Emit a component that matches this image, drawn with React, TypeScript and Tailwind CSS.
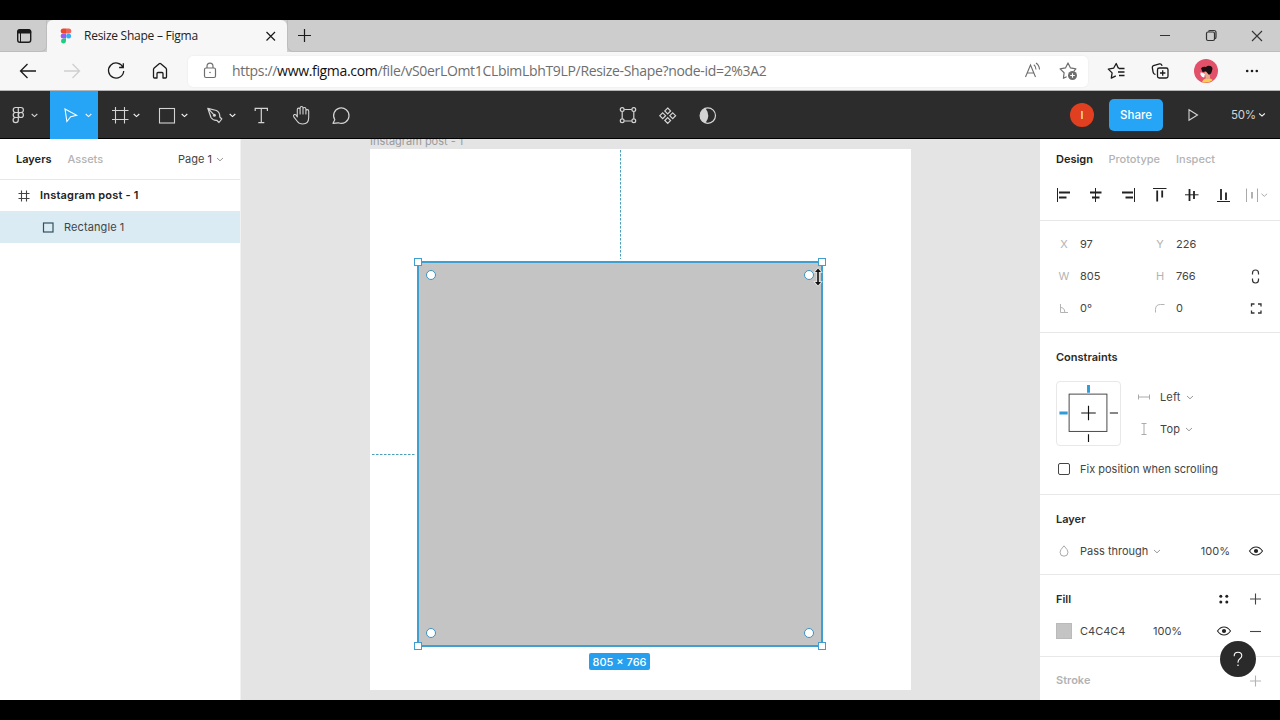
import type { ReactNode } from "react";

type IconProps = { w?: number; h?: number; className?: string; children: ReactNode };

function Icon({ w = 32, h = 32, className = "", children }: IconProps) {
  return (
    <svg
      width={w}
      height={h}
      viewBox={`0 0 ${w} ${h}`}
      fill="none"
      stroke="currentColor"
      className={`shrink-0 ${className}`}
    >
      {children}
    </svg>
  );
}

function FigmaMark() {
  return (
    <svg width="12" height="16" viewBox="0 0 12 16" className="shrink-0">
      <path d="M6 .5H3.2a2.5 2.5 0 0 0 0 5H6z" fill="#e8492f" />
      <path d="M6 .5h2.8a2.5 2.5 0 0 1 0 5H6z" fill="#f0655a" />
      <path d="M6 5.5H3.2a2.5 2.5 0 0 0 0 5H6z" fill="#9a5cf0" />
      <circle cx="8.6" cy="8" r="2.5" fill="#35aef5" />
      <path d="M6 10.5H3.2A2.5 2.5 0 1 0 6 13z" fill="#1fce7c" />
    </svg>
  );
}

function TabStrip() {
  return (
    <div className="flex h-8 shrink-0 bg-[#cdcdcd] text-[#1b1b1b]">
      <div className="flex w-[47px] items-center justify-center rounded-br-md border-r border-b border-[#bdbdbd] pl-[2px]">
        <Icon w={16} h={16}>
          <rect x="1.700" y="1.700" width="13" height="12.6" rx="2.2" strokeWidth="1.4" />
          <path d="M1.700 5V3.500Q2 1.700 3.900 1.700h8.600q2 0 2.200 1.800V5z" fill="currentColor" />
          <path d="M4.500 5v9" strokeWidth="1" />
        </Icon>
      </div>
      <div className="flex w-[240px] items-center rounded-t-md bg-[#f7f7f7] pr-[10px] pl-[13px]">
        <FigmaMark />
        <span className="ml-3 flex-1 font-['Open_Sans',sans-serif] text-[12px] tracking-[-0.250px] whitespace-nowrap text-[#222]">
          Resize Shape – Figma
        </span>
        <Icon w={14} h={14}>
          <path d="M3.500 3l8.500 8.500M12 3L3.500 11.500" strokeWidth="1.200" />
        </Icon>
      </div>
      <div className="flex flex-1 items-center rounded-bl-md border-b border-l border-[#bdbdbd] pl-[9px]">
        <Icon w={16} h={16}>
          <path d="M7.500 1v13M1 7.500h13" strokeWidth="1.200" />
        </Icon>
      </div>
      <div className="flex border-b border-[#bdbdbd] text-[#333]">
        <Icon w={46} h={32}>
          <path d="M18 15.500h10" strokeWidth="1" />
        </Icon>
        <Icon w={46} h={32}>
          <rect x="18.500" y="12" width="8" height="8.500" rx="1.500" strokeWidth="1.200" />
          <path d="M20.500 11.500q.3-1 1.700-1h3.800q2 0 2 2v4.500q0 1.300-1 1.700" strokeWidth="1.200" />
        </Icon>
        <Icon w={46} h={32}>
          <path d="M18 11l10 10M28 11L18 21" strokeWidth="1.100" />
        </Icon>
      </div>
    </div>
  );
}

function AddressBar() {
  return (
    <div className="flex h-[39px] shrink-0 items-center border-b border-[#b5b5b5] bg-[#f7f7f7] pl-[6px] text-[#1b1b1b]">
      <Icon w={44} h={38}>
        <path d="M30 19H14.500M21.500 12L14.500 19l7 7" strokeWidth="1.300" />
      </Icon>
      <Icon w={44} h={38} className="text-[#cfcfcf]">
        <path d="M14 19h15.500M22.500 12l7 7-7 7" strokeWidth="1.300" />
      </Icon>
      <Icon w={44} h={38}>
        <path d="M29 15.300A7.600 7.600 0 1 0 29.700 19M29.300 11.300v4.200h-4.200" strokeWidth="1.300" />
      </Icon>
      <Icon w={44} h={38}>
        <path
          d="M15.500 17.500q0-.9.700-1.500l5-4.300q.8-.6 1.600 0l5 4.300q.7.600.7 1.500v7.500q0 1-1 1H25v-4.500q0-1-1-1h-4q-1 0-1 1V26h-2.500q-1 0-1-1z"
          strokeWidth="1.300"
          strokeLinejoin="round"
        />
      </Icon>
      <div className="ml-[6px] flex h-[31px] w-[900px] items-center rounded-[5px] bg-white pl-3 text-[#6e6e6e] shadow-[0_0_2px_rgba(0,0,0,0.08)]">
        <Icon w={20} h={30}>
          <rect x="4.500" y="12" width="11" height="9.500" rx="1.500" strokeWidth="1.200" />
          <path d="M7 12V10.500q0-3.300 3-3.300t3 3.300v1.500" strokeWidth="1.200" />
          <circle cx="10" cy="16.500" r=".8" fill="currentColor" stroke="none" />
        </Icon>
        <span className="ml-3 flex-1 font-['Open_Sans',sans-serif] text-[14px] leading-5 tracking-[-0.330px] whitespace-nowrap">
          https://<span className="text-[#111]">www.figma.com</span>
          /file/vS0erLOmt1CLbimLbhT9LP/Resize-Shape?node-id=2%3A2
        </span>
        <Icon w={36} h={30}>
          <path d="M11.500 21l5-12 5 12M13.200 17h6.600" strokeWidth="1.100" />
          <path d="M19.800 8.800q2.200 1.600 2.200 4.600M22 7q3.300 2.300 3.500 6.500" strokeWidth="1.100" />
        </Icon>
        <Icon w={36} h={30} className="mr-[2px]">
          <path
            d="M14.500 20.300l-3.300 1.500.7-5.500-4-3.900 5.400-1L15.800 6.500l2.500 4.900 5.400 1-2 2.300"
            transform="translate(2.200 .5)"
            strokeWidth="1.200"
            strokeLinejoin="round"
          />
          <circle cx="22.500" cy="19.500" r="4.500" fill="currentColor" stroke="none" />
          <path d="M22.500 17.200v4.600M20.200 19.500h4.600" stroke="white" strokeWidth="1.100" />
        </Icon>
      </div>
      <Icon w={44} h={38} className="ml-[6px]">
        <path
          d="M22.500 16.300h-.8l-2-4.500-2.600 4.700-5.300.9 3.800 3.800-.8 5.300 4.500-2.300"
          transform="translate(2.500 -.3)"
          strokeWidth="1.300"
          strokeLinejoin="round"
        />
        <path d="M25 16.500h5.500M24 20h6.500M25 23.500h5.500" strokeWidth="1.300" />
      </Icon>
      <Icon w={44} h={38}>
        <rect x="19.500" y="16" width="10.500" height="10" rx="1.800" strokeWidth="1.300" />
        <path d="M24.700 18.300v5.400M22 21h5.400" strokeWidth="1.300" />
        <path
          d="M17.500 22.500l-1.200-.5q-1-.6-1.200-1.800l-.8-4.500q-.1-1.500 1.200-2l6-1.800q1.800-.3 2.300 1.200l.2.800"
          strokeWidth="1.300"
        />
      </Icon>
      <svg width="24" height="24" viewBox="0 0 24 24" className="ml-3 shrink-0">
        <circle cx="12" cy="12" r="12" fill="#e2506a" />
        <path d="M8 23.300q.8-3.600 5.500-4.300 4 .2 5 2.200Q15 24.500 8 23.300z" fill="#f5d04c" />
        <path d="M10 11h5.500l.5 8q-2 2-4 .8z" fill="#e9a98c" />
        <path d="M7 9.300Q9 7.300 12 8q1.500-2 4.500-1 2.800 1.300 1.700 4-.6 4-3.400 4.700L12 12.500 8.500 13z" fill="#1a1014" />
        <path d="M6.500 13.500q2.800-.3 4.500 1.500l-.8 3.500Q7.500 18.500 6.500 15.500z" fill="#fff" />
      </svg>
      <Icon w={24} h={38} className="ml-[22px]">
        <g fill="currentColor" stroke="none">
          <circle cx="7.200" cy="19" r="1.300" />
          <circle cx="12" cy="19" r="1.300" />
          <circle cx="16.800" cy="19" r="1.300" />
        </g>
      </Icon>
    </div>
  );
}

function ToolChevron() {
  return <path d="M35.700 23l2.800 2.600 2.800-2.600" stroke="#f4f4f4" strokeWidth="1.100" />;
}

function Toolbar() {
  return (
    <div className="flex h-12 shrink-0 items-center border-b border-black bg-[#2c2c2c] text-[#d4d4d4]">
      <div className="flex w-[608px]">
        <Icon w={50} h={48}>
          <path
            d="M18.300 16.500v12.600a2.600 2.600 0 1 1-2.600-2.600h2.600M18.300 16.500h-2.600a2.500 2.500 0 0 0 0 5h5.200a2.500 2.500 0 0 0 0-5zM18.300 21.500h-2.600a2.500 2.500 0 0 0 0 5h2.600"
            strokeWidth="1.200"
          />
          <circle cx="20.900" cy="24" r="2.500" strokeWidth="1.200" />
          <path d="M31.700 23l2.800 2.600 2.800-2.600" strokeWidth="1.100" />
        </Icon>
        <Icon w={48} h={48} className="bg-[#26a4f5] text-white">
          <path d="M15 18l11.600 6.200-5.900 1.500-3.800 4.800z" strokeWidth="1.100" />
          <ToolChevron />
        </Icon>
        <Icon w={48} h={48}>
          <path d="M17.500 16v16.500M26.500 16v16.500M14 19.500h16.500M14 28.500h16.500" strokeWidth="1.100" />
          <ToolChevron />
        </Icon>
        <Icon w={48} h={48}>
          <rect x="13.500" y="17.500" width="15" height="14.500" strokeWidth="1.100" />
          <ToolChevron />
        </Icon>
        <Icon w={48} h={48}>
          <path
            d="M13.800 17.300l8.700 2.200q3.500 1.700 3.300 6.500l2 2-2.800 3.500-2.300-2.200q-3.700.3-5.700-2.800zM14.200 17.700l5.600 6"
            strokeWidth="1.200"
            strokeLinejoin="round"
          />
          <circle cx="20.400" cy="24.200" r="1.500" fill="currentColor" stroke="none" />
          <ToolChevron />
        </Icon>
        <Icon w={40} h={48}>
          <path d="M13.200 20v-2.700h12.200V20M19.300 17.300v14.200M16.300 31.700h6" strokeWidth="1.200" />
        </Icon>
        <Icon w={40} h={48}>
          <path
            d="M15 26v-7.500a1.400 1.400 0 0 1 2.800 0V23v-6a1.400 1.400 0 0 1 2.900 0v6-5a1.400 1.400 0 0 1 2.900 0v5-3a1.400 1.400 0 0 1 2.800 0v6.500q0 6.500-6 6.500-3.600 0-5.300-2.500l-3.600-4.700q-.8-1.500.5-2.200 1.200-.4 2 .6z"
            transform="translate(.3 0)"
            strokeWidth="1.100"
            strokeLinejoin="round"
          />
        </Icon>
        <Icon w={40} h={48}>
          <path d="M11 32.300l1.800-3.500a7.700 7.700 0 1 1 3.600 3z" strokeWidth="1.200" strokeLinejoin="round" />
        </Icon>
      </div>
      <div className="flex">
        <Icon w={40} h={48}>
          <path d="M14.200 20.500v7.300M25.800 20.500v7.300M16.300 18.500h7.400M16.300 30h7.400" strokeWidth="1.200" />
          <g strokeWidth="1.200">
            <circle cx="14.200" cy="18.600" r="1.900" />
            <circle cx="25.800" cy="18.600" r="1.900" />
            <circle cx="14.200" cy="29.800" r="1.900" />
            <circle cx="25.800" cy="29.800" r="1.900" />
          </g>
        </Icon>
        <Icon w={40} h={48}>
          <path
            d="M19.700 17l2.900 2.900-2.900 2.900-2.900-2.900zM19.700 26.600l2.900 2.900-2.900 2.900-2.900-2.900zM14.700 21.800l2.900 2.900-2.900 2.900-2.900-2.900zM24.700 21.800l2.900 2.900-2.900 2.900-2.900-2.900z"
            strokeWidth="1.200"
          />
        </Icon>
        <Icon w={40} h={48}>
          <circle cx="19.800" cy="24.600" r="7.700" strokeWidth="1.200" />
          <path d="M17.500 17.200q5.500 7.400 0 14.800-5.500-2-5.500-7.400t5.500-7.400z" fill="currentColor" stroke="none" />
        </Icon>
      </div>
      <div className="flex flex-1 items-center justify-end pt-px font-['Inter',sans-serif]">
        <div className="flex size-6 items-center justify-center rounded-full bg-[#e0401f] text-[11px] text-white">I</div>
        <div className="ml-[15px] flex h-8 w-[54px] items-center justify-center rounded-[5px] bg-[#26a4f5] pt-px text-[11.500px] font-medium text-white">
          Share
        </div>
        <Icon w={20} h={48} className="ml-[20px]">
          <path d="M6 18.700l8.500 5.300-8.500 5.200z" strokeWidth="1.100" />
        </Icon>
        <span className="ml-7 w-[24px] pt-[2px] text-[11.500px] tracking-[-0.300px] whitespace-nowrap">50%</span>
        <Icon w={14} h={48} className="mr-[11px]">
          <path d="M4.200 22.500l2.800 2.600 2.800-2.600" stroke="#f4f4f4" strokeWidth="1.100" />
        </Icon>
      </div>
    </div>
  );
}

function SmallChevron() {
  return (
    <Icon w={8} h={8} className="text-[#999]">
      <path d="M1 3l3 2.800 3-2.800" strokeWidth="1" />
    </Icon>
  );
}

function LayersPanel() {
  return (
    <div className="flex w-[241px] shrink-0 flex-col border-r border-[#f2f2f2] bg-white">
      <div className="flex h-[41px] items-center border-b border-[#e8e8e8] pl-4">
        <span className="font-semibold text-[#222]">Layers</span>
        <span className="ml-4 font-medium text-[#b3b3b3]">Assets</span>
        <span className="mr-1 ml-auto">Page 1</span>
        <div className="mr-4">
          <SmallChevron />
        </div>
      </div>
      <div className="flex h-[31px] items-center pl-4">
        <Icon w={16} h={16} className="text-[#444]">
          <path d="M5.500 2.500v11M10.500 2.500v11M2.500 5.500h11M2.500 10.500h11" strokeWidth="1.100" />
        </Icon>
        <span className="ml-2 font-semibold tracking-[0.200px] text-[#222]">Instagram post - 1</span>
      </div>
      <div className="flex h-8 items-center bg-[#daebf4] pl-10">
        <Icon w={16} h={16} className="text-[#34505c]">
          <rect x="3.500" y="4" width="9.500" height="9" strokeWidth="1.200" />
        </Icon>
        <span className="ml-2 tracking-[0.100px]">Rectangle 1</span>
      </div>
    </div>
  );
}

const corners = ["-left-[5px] -top-[5px]", "-right-[5px] -top-[5px]", "-left-[5px] -bottom-[5px]", "-right-[5px] -bottom-[5px]"];
const radii = ["left-[7px] top-[7px]", "right-[7px] top-[7px]", "left-[7px] bottom-[7px]", "right-[7px] bottom-[7px]"];

function Canvas() {
  return (
    <div className="relative flex-1 overflow-hidden bg-[#e4e4e4]">
      <span className="absolute -top-[6px] left-[129px] text-[11px] leading-4 whitespace-nowrap text-[#9a9a9a]">
        Instagram post - 1
      </span>
      <div className="absolute top-[10px] left-[129px] h-[541px] w-[541px] bg-white">
        <svg width="1" height="112" viewBox="0 0 1 112" className="absolute top-0 left-[250px]">
          <path d="M.5 1v109" stroke="#4aa0b8" strokeDasharray="2.500 1.500" />
        </svg>
        <svg width="48" height="1" viewBox="0 0 48 1" className="absolute top-[305px] left-0">
          <path d="M2 .5h44" stroke="#4aa0b8" strokeDasharray="2.500 1.500" />
        </svg>
        <div className="absolute top-[112px] left-[47px] h-[386px] w-[406px] border-2 border-[#3fa0cf] bg-[#c4c4c4]">
          {corners.map((c) => (
            <div key={c} className={`absolute size-2 border border-[#3fa0cf] bg-white ${c}`} />
          ))}
          {radii.map((c) => (
            <div key={c} className={`absolute size-[10px] rounded-full border border-[#3b93c0] bg-white ${c}`} />
          ))}
        </div>
        <div className="absolute top-[504px] left-[219px] flex h-[17px] w-[61px] items-center justify-center rounded-[2px] bg-[#26a0ee] pt-px text-[11px] font-medium whitespace-nowrap text-white">
          805 × 766
        </div>
        <svg width="10" height="20" viewBox="0 0 10 20" className="absolute top-[118px] left-[443px]">
          <path
            d="M5 1.500L8 5H5.800v10H8L5 18.500 2 15h2.200V5H2z"
            fill="#111"
            stroke="#e8e8e8"
            strokeWidth="1.600"
            paintOrder="stroke"
          />
        </svg>
      </div>
    </div>
  );
}

function Field({ label, value }: { label: ReactNode; value: string }) {
  return (
    <div className="flex w-24 items-center">
      <span className="flex w-8 justify-center text-[#b3b3b3]">{label}</span>
      <span>{value}</span>
    </div>
  );
}

function Title({ children }: { children: ReactNode }) {
  return <span className="font-semibold text-[#2a2a2a]">{children}</span>;
}

function Eye() {
  return (
    <Icon className="text-[#222]">
      <path d="M9.500 16q2.700-4 6.500-4t6.500 4q-2.700 4-6.500 4t-6.500-4z" strokeWidth="1.100" />
      <circle cx="16" cy="16" r="2.100" fill="currentColor" stroke="none" />
    </Icon>
  );
}

function Plus({ className = "" }: { className?: string }) {
  return (
    <Icon className={className}>
      <path d="M15.500 10.500v11M10 16h11" strokeWidth="1.100" />
    </Icon>
  );
}

function DesignPanel() {
  return (
    <div className="flex w-60 shrink-0 flex-col overflow-hidden bg-white">
      <div className="flex h-10 shrink-0 items-center gap-4 pl-4 font-medium text-[#b3b3b3]">
        <span className="-mr-[0.500px] font-semibold text-[#222]">Design</span>
        <span>Prototype</span>
        <span>Inspect</span>
      </div>
      <div className="flex h-[42px] shrink-0 border-b border-[#e8e8e8] pl-2 text-[#222]">
        <Icon>
          <path d="M9.500 9v14" strokeWidth="1" />
          <path d="M11 13.500h11M11 18.500h7.500" strokeWidth="1.800" />
        </Icon>
        <Icon>
          <path d="M15.500 9v14" strokeWidth="1" />
          <path d="M10 13.500h11.500M12 18.500h7.500" strokeWidth="1.800" />
        </Icon>
        <Icon>
          <path d="M22.500 9v14" strokeWidth="1" />
          <path d="M10 13.500h11M13.500 18.500h7.500" strokeWidth="1.800" />
        </Icon>
        <Icon>
          <path d="M9 9.500h13.500" strokeWidth="1" />
          <path d="M13.200 11.500v11M18.200 11.500v7" strokeWidth="1.800" />
        </Icon>
        <Icon>
          <path d="M9 15.800h13.500" strokeWidth="1" />
          <path d="M13.500 10v12M18 12v8" strokeWidth="1.800" />
        </Icon>
        <Icon>
          <path d="M9 22.500h13" strokeWidth="1" />
          <path d="M13 10v11M18 13.500V21" strokeWidth="1.800" />
        </Icon>
        <Icon className="text-[#aaa]">
          <path d="M6.500 9.500v13.500M17.500 9.500v13.500M21.500 14.800l2.800 2.500 2.800-2.500" strokeWidth="1" />
          <path d="M12 13v6.500" strokeWidth="1.800" />
        </Icon>
      </div>

      <div className="flex h-[112px] shrink-0 flex-col border-b border-[#e8e8e8] pt-[7px] pl-2">
        <div className="flex h-8 items-center">
          <Field label="X" value="97" />
          <Field label="Y" value="226" />
        </div>
        <div className="flex h-8 items-center">
          <Field label="W" value="805" />
          <Field label="H" value="766" />
          <Icon className="text-[#333]">
            <path d="M12.500 14.500v-1.500a3 3 0 0 1 6 0V14.500M12.500 18.500v1.500a3 3 0 0 0 6 0V18.500" strokeWidth="1.200" />
          </Icon>
        </div>
        <div className="flex h-8 items-center">
          <Field
            label={
              <Icon w={12} h={12}>
                <path d="M2.500 2v8.500h7.500M2.500 5.500q4 0 4.300 4.500" strokeWidth="1" />
              </Icon>
            }
            value="0°"
          />
          <Field
            label={
              <Icon w={12} h={12}>
                <path d="M1.500 10.500V7.500q0-5 5-5h4" strokeWidth="1" />
              </Icon>
            }
            value="0"
          />
          <Icon className="text-[#333]">
            <path d="M11.500 14.500v-2.500h3M18 12h3v2.500M21 18.500v2.500h-3M14.500 21h-3V18.500" strokeWidth="1.300" />
          </Icon>
        </div>
      </div>

      <div className="flex h-[162px] shrink-0 flex-col border-b border-[#e8e8e8] pt-2 pl-4">
        <div className="flex h-8 items-center">
          <Title>Constraints</Title>
        </div>
        <div className="mt-2 flex h-16">
          <svg
            width="65"
            height="65"
            viewBox="0 0 65 65"
            fill="none"
            stroke="#111"
            className="shrink-0 rounded-sm border border-[#e8e8e8]"
          >
            <rect x="12.500" y="12.500" width="39" height="38.500" stroke="#444" />
            <path d="M32.500 24.500v15M25 32h15M54.500 32h8.500M32.500 54v8" strokeWidth="1.200" />
            <path d="M32.500 3v8M2.500 32H11" stroke="#2f9bd8" strokeWidth="3" />
          </svg>
          <div className="flex flex-col pl-[7px]">
            <div className="flex h-8 items-center">
              <Icon className="text-[#aaa]">
                <path d="M10.500 13.500v5M21.500 13.500v5M10.500 16h11" strokeWidth="1" />
              </Icon>
              <span className="mr-[5px] tracking-[0.150px]">Left</span>
              <SmallChevron />
            </div>
            <div className="flex h-8 items-center">
              <Icon className="text-[#aaa]">
                <path d="M13.500 10.500h5M13.500 21.500h5M16 10.500v11" strokeWidth="1" />
              </Icon>
              <span className="mr-[5px] tracking-[0.150px]">Top</span>
              <SmallChevron />
            </div>
          </div>
        </div>
        <div className="mt-2 flex h-8 items-center">
          <span className="mr-[10px] ml-[2px] size-3 rounded-[2px] border border-[#444]" />
          <span>Fix position when scrolling</span>
        </div>
      </div>

      <div className="flex h-20 shrink-0 flex-col border-b border-[#e8e8e8] pt-2">
        <div className="flex h-8 items-center pl-4">
          <Title>Layer</Title>
        </div>
        <div className="flex h-8 items-center pl-2">
          <Icon className="text-[#aaa]">
            <path d="M16 10.800q-4 4.200-4 6.400a4 4 0 0 0 8 0q0-2.200-4-6.400z" strokeWidth="1" />
          </Icon>
          <span className="mr-[5px]">Pass through</span>
          <SmallChevron />
          <span className="ml-auto pr-[10px]">100%</span>
          <div className="mr-2">
            <Eye />
          </div>
        </div>
      </div>

      <div className="flex h-[82px] shrink-0 flex-col border-b border-[#e8e8e8] pt-2 pr-2 pl-4">
        <div className="flex h-8 items-center">
          <Title>Fill</Title>
          <Icon className="ml-auto text-[#222]">
            <g fill="currentColor" stroke="none">
              <circle cx="12.800" cy="13.300" r="1.500" />
              <circle cx="18.800" cy="13.300" r="1.500" />
              <circle cx="12.800" cy="19" r="1.500" />
              <circle cx="18.800" cy="19" r="1.500" />
            </g>
          </Icon>
          <Plus />
        </div>
        <div className="flex h-8 items-center">
          <span className="mr-2 size-4 border border-[#bababa] bg-[#c4c4c4]" />
          <span className="w-[73px]">C4C4C4</span>
          <span>100%</span>
          <div className="ml-auto flex">
            <Eye />
            <Icon>
              <path d="M10 16.500h11" strokeWidth="1.100" />
            </Icon>
          </div>
        </div>
      </div>

      <div className="flex h-[47px] shrink-0 items-center pr-2 pl-4 text-[#b3b3b3]">
        <span className="flex-1 font-semibold">Stroke</span>
        <Plus />
      </div>
    </div>
  );
}

export default function App() {
  return (
    <div className="flex h-[720px] w-[1280px] flex-col overflow-hidden bg-black py-5">
      <TabStrip />
      <AddressBar />
      <Toolbar />
      <div className="relative flex min-h-0 flex-1 overflow-hidden font-['Inter',sans-serif] text-[11px] text-[#444]">
        <LayersPanel />
        <Canvas />
        <DesignPanel />
        <button
          aria-label="Help"
          className="absolute right-6 bottom-[23px] flex size-9 items-center justify-center rounded-full bg-[#2a2a2a] text-white"
        >
          <Icon w={12} h={16}>
            <path
              d="M2.200 4.800Q2.300 1.300 6 1.300t3.800 3.500q0 1.700-1.900 3Q6 9.100 6 11.200"
              strokeWidth="1.100"
              strokeLinecap="round"
            />
            <circle cx="6" cy="14.200" r=".8" fill="currentColor" stroke="none" />
          </Icon>
        </button>
      </div>
    </div>
  );
}
